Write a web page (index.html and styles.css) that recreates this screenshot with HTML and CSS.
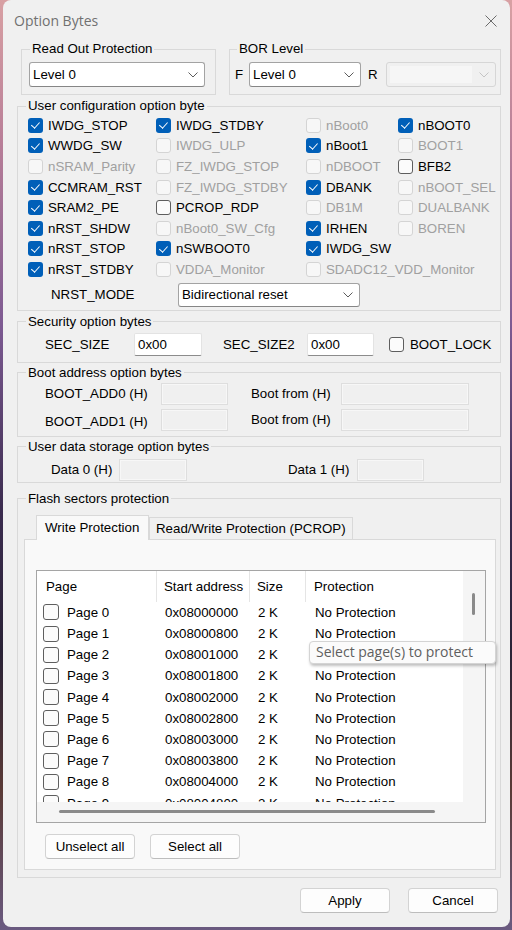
FILE: index.html
```html
<!DOCTYPE html>
<html lang="en">
<head>
<meta charset="utf-8">
<title>Option Bytes</title>
<link rel="stylesheet" href="styles.css">
</head>
<body>
<div class="window">
  <header class="titlebar">
    <span class="title">Option Bytes</span>
    <svg class="close" width="12" height="12" viewBox="0 0 12 12"><path d="M0.5 0.5 L11.5 11.5 M11.5 0.5 L0.5 11.5" stroke="#6b6b6b" stroke-width="1" fill="none"/></svg>
  </header>
  <main class="content">
    <div class="toprow">
      <fieldset class="grp rop">
        <legend>Read Out Protection</legend>
        <div class="combo rop-combo"><span>Level 0</span><svg class="chev" width="10" height="6" viewBox="0 0 10 6"><path d="M0.5 0.5 L5 5 L9.5 0.5" stroke="#5c5c5c" stroke-width="1" fill="none"/></svg></div>
      </fieldset>
      <fieldset class="grp bor">
        <legend>BOR Level</legend>
        <div class="bor-row">
          <span class="fl">F</span>
          <div class="combo bor-combo"><span>Level 0</span><svg class="chev" width="10" height="6" viewBox="0 0 10 6"><path d="M0.5 0.5 L5 5 L9.5 0.5" stroke="#5c5c5c" stroke-width="1" fill="none"/></svg></div>
          <span class="rl">R</span>
          <div class="combo dis bor-combo2"><span class="inner"></span><svg class="chev" width="10" height="6" viewBox="0 0 10 6"><path d="M0.5 0.5 L5 5 L9.5 0.5" stroke="#c4c4c4" stroke-width="1" fill="none"/></svg></div>
        </div>
      </fieldset>
    </div>

    <fieldset class="grp user">
      <legend>User configuration option byte</legend>
      <div class="ucgrid">
        <label class="cbi"><span class="cb on"></span>IWDG_STOP</label>
        <label class="cbi"><span class="cb on"></span>IWDG_STDBY</label>
        <label class="cbi d"><span class="cb dis"></span>nBoot0</label>
        <label class="cbi"><span class="cb on"></span>nBOOT0</label>

        <label class="cbi"><span class="cb on"></span>WWDG_SW</label>
        <label class="cbi d"><span class="cb dis"></span>IWDG_ULP</label>
        <label class="cbi"><span class="cb on"></span>nBoot1</label>
        <label class="cbi d"><span class="cb dis"></span>BOOT1</label>

        <label class="cbi d"><span class="cb dis"></span>nSRAM_Parity</label>
        <label class="cbi d"><span class="cb dis"></span>FZ_IWDG_STOP</label>
        <label class="cbi d"><span class="cb dis"></span>nDBOOT</label>
        <label class="cbi"><span class="cb off"></span>BFB2</label>

        <label class="cbi"><span class="cb on"></span>CCMRAM_RST</label>
        <label class="cbi d"><span class="cb dis"></span>FZ_IWDG_STDBY</label>
        <label class="cbi"><span class="cb on"></span>DBANK</label>
        <label class="cbi d"><span class="cb dis"></span>nBOOT_SEL</label>

        <label class="cbi"><span class="cb on"></span>SRAM2_PE</label>
        <label class="cbi"><span class="cb off"></span>PCROP_RDP</label>
        <label class="cbi d"><span class="cb dis"></span>DB1M</label>
        <label class="cbi d"><span class="cb dis"></span>DUALBANK</label>

        <label class="cbi"><span class="cb on"></span>nRST_SHDW</label>
        <label class="cbi d"><span class="cb dis"></span>nBoot0_SW_Cfg</label>
        <label class="cbi"><span class="cb on"></span>IRHEN</label>
        <label class="cbi d"><span class="cb dis"></span>BOREN</label>

        <label class="cbi"><span class="cb on"></span>nRST_STOP</label>
        <label class="cbi"><span class="cb on"></span>nSWBOOT0</label>
        <label class="cbi"><span class="cb on"></span>IWDG_SW</label>
        <span></span>

        <label class="cbi"><span class="cb on"></span>nRST_STDBY</label>
        <label class="cbi d"><span class="cb dis"></span>VDDA_Monitor</label>
        <label class="cbi d span2"><span class="cb dis"></span>SDADC12_VDD_Monitor</label>
      </div>
      <div class="nrst-row">
        <span class="nrst-lab">NRST_MODE</span>
        <div class="combo nrst-combo"><span>Bidirectional reset</span><svg class="chev" width="10" height="6" viewBox="0 0 10 6"><path d="M0.5 0.5 L5 5 L9.5 0.5" stroke="#5c5c5c" stroke-width="1" fill="none"/></svg></div>
      </div>
    </fieldset>

    <fieldset class="grp sec">
      <legend>Security option bytes</legend>
      <div class="sec-row">
        <span class="lab sec1">SEC_SIZE</span>
        <div class="edit e68">0x00</div>
        <span class="lab sec2">SEC_SIZE2</span>
        <div class="edit e67">0x00</div>
        <label class="cbi bootlock"><span class="cb off"></span>BOOT_LOCK</label>
      </div>
    </fieldset>

    <fieldset class="grp boot">
      <legend>Boot address option bytes</legend>
      <div class="boot-row">
        <span class="lab b1">BOOT_ADD0 (H)</span>
        <div class="dedit e67"></div>
        <span class="lab b2">Boot from (H)</span>
        <div class="dedit e128"></div>
      </div>
      <div class="boot-row">
        <span class="lab b1 low">BOOT_ADD1 (H)</span>
        <div class="dedit e67"></div>
        <span class="lab b2">Boot from (H)</span>
        <div class="dedit e128"></div>
      </div>
    </fieldset>

    <fieldset class="grp udata">
      <legend>User data storage option bytes</legend>
      <div class="ud-row">
        <span class="lab u1">Data 0 (H)</span>
        <div class="dedit e68"></div>
        <span class="lab u2">Data 1 (H)</span>
        <div class="dedit e67"></div>
      </div>
    </fieldset>

    <fieldset class="grp flash">
      <legend>Flash sectors protection</legend>
      <div class="tabs">
        <div class="tab sel">Write Protection</div>
        <div class="tab">Read/Write Protection (PCROP)</div>
      </div>
      <div class="panel">
        <div class="list">
          <div class="list-top">
            <div class="list-main">
              <div class="lv-head">
                <span class="c1">Page</span>
                <span class="c2">Start address</span>
                <span class="c3">Size</span>
                <span class="c4">Protection</span>
              </div>
              <div class="lv-body">
                <div class="lv-row"><span class="c1"><span class="cb off lcb"></span>Page 0</span><span class="c2">0x08000000</span><span class="c3">2 K</span><span class="c4">No Protection</span></div>
                <div class="lv-row"><span class="c1"><span class="cb off lcb"></span>Page 1</span><span class="c2">0x08000800</span><span class="c3">2 K</span><span class="c4">No Protection</span></div>
                <div class="lv-row"><span class="c1"><span class="cb off lcb"></span>Page 2</span><span class="c2">0x08001000</span><span class="c3">2 K</span><span class="c4 under-tip">No Protection</span></div>
                <div class="lv-row"><span class="c1"><span class="cb off lcb"></span>Page 3</span><span class="c2">0x08001800</span><span class="c3">2 K</span><span class="c4">No Protection</span></div>
                <div class="lv-row"><span class="c1"><span class="cb off lcb"></span>Page 4</span><span class="c2">0x08002000</span><span class="c3">2 K</span><span class="c4">No Protection</span></div>
                <div class="lv-row"><span class="c1"><span class="cb off lcb"></span>Page 5</span><span class="c2">0x08002800</span><span class="c3">2 K</span><span class="c4">No Protection</span></div>
                <div class="lv-row"><span class="c1"><span class="cb off lcb"></span>Page 6</span><span class="c2">0x08003000</span><span class="c3">2 K</span><span class="c4">No Protection</span></div>
                <div class="lv-row"><span class="c1"><span class="cb off lcb"></span>Page 7</span><span class="c2">0x08003800</span><span class="c3">2 K</span><span class="c4">No Protection</span></div>
                <div class="lv-row"><span class="c1"><span class="cb off lcb"></span>Page 8</span><span class="c2">0x08004000</span><span class="c3">2 K</span><span class="c4">No Protection</span></div>
                <div class="lv-row"><span class="c1"><span class="cb off lcb"></span>Page 9</span><span class="c2">0x08004800</span><span class="c3">2 K</span><span class="c4">No Protection</span></div>
              </div>
            </div>
            <div class="vscroll"><span class="vthumb"></span></div>
          </div>
          <div class="hscroll"><span class="hthumb"></span><span class="corner"></span></div>
        </div>
        <div class="panel-btns">
          <button class="btn">Unselect all</button>
          <button class="btn">Select all</button>
        </div>
      </div>
    </fieldset>

    <div class="dlg-btns">
      <button class="btn">Apply</button>
      <button class="btn">Cancel</button>
    </div>
  </main>
  <div class="tooltip">Select page(s) to protect</div>
</div>
</body>
</html>
```

FILE: styles.css
```css
* { box-sizing: border-box; }
html, body { margin: 0; padding: 0; }
body {
  width: 512px;
  height: 930px;
  overflow: hidden;
  background: linear-gradient(180deg, #d8a0a3 0%, #b97f98 15%, #7d5a92 35%, #3a2b4e 55%, #2a2236 70%, #5a3a36 85%, #6a5a80 100%);
  font-family: "Liberation Sans", Arial, sans-serif;
  font-size: 13.3px;
  color: #000;
}
.window {
  position: relative;
  margin-left: 3px;
  width: 507px;
  height: 927px;
  background: #f0f0f0;
  border-radius: 8px;
  overflow: hidden;
}
.titlebar {
  height: 41px;
  display: flex;
  align-items: center;
  justify-content: space-between;
  padding: 0 13px 0 11px;
}
.title {
  font-family: "Open Sans", "Noto Sans", sans-serif;
  font-size: 14px;
  color: #717171;
}
.close { display: block; margin-top: 1px; }
.content { padding: 0 9px 0 14px; }

/* group boxes */
.grp {
  --pl: 0px;
  margin: 0;
  padding: 0 0 0 var(--pl);
  border: 1px solid #d9d9d9;
  min-width: 0;
}
.grp > legend {
  margin-left: calc(8px - var(--pl));
  padding: 0 2px;
  line-height: 16px;
  height: 16px;
}
.toprow { display: flex; gap: 13px; padding-left: 4px; }
.rop { --pl: 7px; width: 195px; padding-top: 5px; padding-bottom: 7px; }
.bor { --pl: 5px; width: 272px; padding-top: 5px; padding-bottom: 7px; }
.bor > legend { margin-left: calc(7px - var(--pl)); }

/* combo boxes */
.combo {
  height: 25px;
  background: #fff;
  border: 1px solid #a3a3a3;
  border-bottom-color: #868686;
  border-radius: 3px;
  display: flex;
  align-items: center;
  justify-content: space-between;
  padding: 0 6px 0 3px;
}
.chev { display: block; flex: none; }
.rop-combo { width: 176px; }
.bor-row { display: flex; align-items: center; }
.fl { width: 14px; }
.rl { width: 25px; padding-left: 7px; }
.bor-combo { width: 112px; }
.bor-combo2 { width: 110px; }
.combo.dis {
  background: #f0f0f0;
  border-color: #d6d6d6;
  padding-left: 3px;
}
.combo.dis .inner {
  width: 82px;
  height: 17px;
  background: #f6f6f6;
}

/* user config */
.user { --pl: 10px; margin-top: 3px; padding-top: 1px; padding-bottom: 3px; }
.ucgrid {
  display: grid;
  grid-template-columns: 128px 150px 92px auto;
  grid-auto-rows: 20.6px;
}
.cbi {
  display: flex;
  align-items: center;
  gap: 5px;
  white-space: nowrap;
}
.cbi.d { color: #a0a0a0; }
.span2 { grid-column: span 2; }
.cb {
  position: relative;
  flex: none;
  width: 15px;
  height: 15px;
  border-radius: 3px;
}
.cb.on { background: #005fb8; }
.cb.on::after {
  content: "";
  position: absolute;
  left: 5px;
  top: 2.5px;
  width: 3.5px;
  height: 7px;
  border: solid #fff;
  border-width: 0 1.3px 1.3px 0;
  transform: rotate(42deg);
}
.cb.off { border: 1px solid #5e5e5e; background: #fbfbfb; }
.cb.dis { border: 1px solid #d4d4d4; background: #f7f7f7; }
.nrst-row { display: flex; align-items: center; margin-top: 3px; padding-left: 23px; }
.nrst-lab { width: 127px; }
.nrst-combo { width: 182px; height: 24px; }

/* security */
.sec { --pl: 27px; margin-top: 3px; padding-top: 3px; padding-bottom: 6px; }
.sec-row { display: flex; align-items: center; height: 23px; }
.lab { white-space: nowrap; flex: none; }
.sec1 { width: 89px; }
.sec2 { width: 84px; margin-left: 21px; }
.edit {
  height: 23px;
  background: #fff;
  border: 1px solid #e3e3e3;
  border-bottom-color: #8c8c8c;
  border-radius: 2px;
  padding: 3px 0 0 3px;
  flex: none;
}
.e68 { width: 68px; }
.e67 { width: 67px; }
.e128 { width: 128px; }
.bootlock { margin-left: 15px; gap: 6px; }

/* boot address */
.boot { --pl: 27px; margin-top: 2px; padding-bottom: 3px; }
.boot-row { display: flex; align-items: center; height: 26px; }
.b1 { width: 116px; }
.b1.low { padding-top: 3px; }
.b2 { width: 90px; margin-left: 23px; }
.dedit {
  height: 22px;
  border: 1px solid #dedede;
  box-shadow: inset 0 0 0 1px #f7f7f7;
  flex: none;
}

/* user data */
.udata { --pl: 33px; margin-top: 2px; padding-top: 4px; padding-bottom: 1px; }
.ud-row { display: flex; align-items: center; height: 22px; }
.u1 { width: 68px; }
.u2 { width: 69px; margin-left: 101px; }

/* flash */
.flash { --pl: 6px; margin-top: 8px; padding-top: 8px; padding-right: 4px; padding-bottom: 7px; }
.tabs { display: flex; align-items: flex-end; height: 24px; padding-left: 12px; }
.tab {
  height: 22px;
  border: 1px solid #d9d9d9;
  border-bottom: none;
  background: #f0f0f0;
  line-height: 21px;
  padding: 0 6px;
  white-space: nowrap;
}
.tab.sel {
  position: relative;
  z-index: 1;
  height: 25px;
  margin-bottom: -1px;
  width: 113px;
  padding-left: 8px;
  line-height: 23px;
  background: #f9f9f9;
}
.panel {
  height: 331px;
  border: 1px solid #d9d9d9;
  background: #f9f9f9;
  padding: 30px 9px 0 11px;
}
.list {
  height: 253px;
  border: 1px solid #a5a5a5;
  background: #fff;
  display: flex;
  flex-direction: column;
}
.list-top { display: flex; height: 231px; }
.list-main { width: 426px; overflow: hidden; }
.lv-head {
  display: grid;
  grid-template-columns: 120px 93px 56px 157px;
  height: 31px;
}
.lv-head span {
  line-height: 31px;
  border-right: 1px solid #e5e5e5;
  white-space: nowrap;
}
.lv-head .c1 { padding-left: 9px; }
.lv-head .c2 { padding-left: 7px; }
.lv-head .c3 { padding-left: 7px; }
.lv-head .c4 { padding-left: 8px; border-right: none; }
.lv-row {
  display: grid;
  grid-template-columns: 120px 93px 56px 157px;
  height: 21.2px;
  align-items: center;
  white-space: nowrap;
}
.lv-row .c1 { display: flex; align-items: center; gap: 8px; padding-left: 6px; }
.lv-row .c2 { padding-left: 8px; }
.lv-row .c3 { padding-left: 8px; }
.lv-row .c4 { padding-left: 9px; }
.lcb { width: 16px; height: 16px; border-color: #6a6a6a; }
.vscroll {
  width: 22px;
  background: #f5f5f5;
  padding: 22px 0 0 9px;
}
.vthumb {
  display: block;
  width: 3px;
  height: 22px;
  border-radius: 2px;
  background: #8a8a8a;
}
.hscroll {
  flex: 1;
  display: flex;
  align-items: center;
  background: #f5f5f5;
  padding-left: 22px;
}
.hthumb {
  display: block;
  width: 376px;
  height: 3px;
  border-radius: 2px;
  background: #8a8a8a;
}
.corner { flex: none; }
.panel-btns { display: flex; gap: 15px; padding-left: 9px; margin-top: 11px; }

/* buttons */
.btn {
  width: 90px;
  height: 25px;
  margin: 0;
  padding: 0;
  font-family: "Liberation Sans", Arial, sans-serif;
  font-size: 13.3px;
  color: #000;
  background: #fdfdfd;
  border: 1px solid #d3d3d3;
  border-bottom-color: #bdbdbd;
  border-radius: 4px;
}
.dlg-btns { display: flex; justify-content: flex-end; gap: 18px; margin-top: 10px; padding-right: 3px; }

/* tooltip overlay */
.tooltip {
  position: absolute;
  left: 306px;
  top: 641px;
  width: 187px;
  height: 23px;
  background: #fbfbfb;
  border: 1px solid #d4d4d4;
  border-radius: 4px;
  box-shadow: 1px 2px 3px rgba(0,0,0,0.25);
  font-family: "Open Sans", "Noto Sans", sans-serif;
  font-size: 14px;
  line-height: 20px;
  color: #5f5f5f;
  padding-left: 6px;
  white-space: nowrap;
}
```
